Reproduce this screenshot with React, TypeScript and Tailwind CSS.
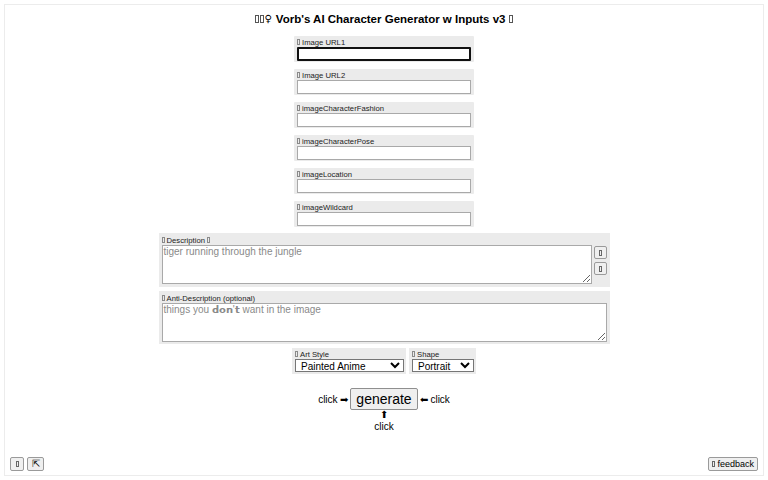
import React from "react";

const font = { fontFamily: '"Liberation Sans", Arial, sans-serif' };

function Tofu({ w = 3, h = 6, className = "" }: { w?: number; h?: number; className?: string }) {
  return (
    <span
      className={"inline-block border align-baseline " + className}
      style={{ width: w, height: h }}
    />
  );
}

function Label({ text, tail }: { text: string; tail?: boolean }) {
  return (
    <div className="text-[7.7px] leading-[9px] text-[#222] whitespace-nowrap">
      <Tofu w={3} h={6} className="mr-[2px] border-[#8a8a8a]" />
      {text}
      {tail && <Tofu w={3} h={6} className="ml-[2px] border-[#8a8a8a]" />}
    </div>
  );
}

function Field({ label, focused }: { label: string; focused?: boolean }) {
  return (
    <div className="w-[180px] bg-[#ebebeb] px-[3px] pt-[2px] pb-[1px] rounded-[1px]">
      <Label text={label} />
      <input
        className={
          "block w-full h-[14px] bg-white outline-none " +
          (focused ? "border-2 border-[#111] rounded-[1px]" : "border border-[#a9a9a9]")
        }
      />
    </div>
  );
}

function SmallBtn({ w = 13, h = 13 }: { w?: number; h?: number }) {
  return (
    <button
      className="flex items-center justify-center bg-[#efefef] border border-[#9a9a9a] rounded-[2px] p-0"
      style={{ width: w, height: h }}
    >
      <Tofu w={3} h={6} className="border-[#666]" />
    </button>
  );
}

export default function App() {
  return (
    <div className="w-[768px] h-[480px] bg-white p-[4px]" style={font}>
      <div className="h-[472px] border border-[#ececec] flex flex-col items-center">
        <div className="mt-[7px] text-[11.5px] leading-[14px] font-bold text-black whitespace-nowrap flex items-center">
          <Tofu w={4} h={8} className="border-[#555]" />
          <Tofu w={4} h={8} className="ml-[1px] border-[#555]" />
          <span className="text-[10px] font-normal ml-[1px]" style={{ fontFamily: '"DejaVu Sans", sans-serif' }}>{"\u2640\uFE0E"}</span>
          <span className="ml-[4px]">Vorb's AI Character Generator w Inputs v3</span>
          <Tofu w={4} h={8} className="ml-[4px] border-[#555]" />
        </div>
        <div className="mt-[10px] flex flex-col gap-[7px]">
          <Field label="Image URL1" focused />
          <Field label="Image URL2" />
          <Field label="imageCharacterFashion" />
          <Field label="imageCharacterPose" />
          <Field label="imageLocation" />
          <Field label="imageWildcard" />
        </div>
        <div className="mt-[6px] w-[451px] bg-[#ebebeb] px-[3px] pt-[3px] pb-[3px]">
          <Label text="Description" tail />
          <div className="flex gap-[2px]">
            <textarea
              className="block w-[430px] h-[39px] bg-white border border-[#a9a9a9] px-[1px] text-[10px] leading-[12px] placeholder:text-[#8a8a8a] resize-y outline-none"
              placeholder="tiger running through the jungle"
            />
            <div className="flex flex-col gap-[3px] pt-[1px]">
              <SmallBtn />
              <SmallBtn />
            </div>
          </div>
        </div>
        <div className="mt-[4px] w-[451px] bg-[#ebebeb] px-[3px] pt-[3px] pb-[2px]">
          <Label text="Anti-Description (optional)" />
          <textarea
            className="block w-full h-[39px] bg-white border border-[#a9a9a9] px-[1px] text-[10px] leading-[12px] placeholder:text-[#8a8a8a] resize-y outline-none"
            placeholder="things you 𝗱𝗼𝗻'𝘁 want in the image"
          />
        </div>
        <div className="mt-[4px] flex gap-[3px]">
          <div className="w-[114px] bg-[#ebebeb] px-[3px] pt-[2px] pb-[2px]">
            <Label text="Art Style" />
            <select className="block w-[109px] h-[13px] bg-white border border-[#767676] text-[10px] leading-[11px] text-black px-[1px] py-0">
              <option>Painted Anime</option>
            </select>
          </div>
          <div className="w-[67px] bg-[#ebebeb] px-[3px] pt-[2px] pb-[2px]">
            <Label text="Shape" />
            <select className="block w-[62px] h-[13px] bg-white border border-[#767676] text-[10px] leading-[11px] text-black px-[1px] py-0">
              <option>Portrait</option>
            </select>
          </div>
        </div>
        <div className="mt-[14px] flex items-center gap-[2px] text-[10px] text-black">
          <span>click ➡</span>
          <button className="h-[22px] px-[5px] bg-[#efefef] border border-[#8f8f8f] rounded-[2px] text-[14px] leading-[18px] text-black">generate</button>
          <span>⬅ click</span>
        </div>
        <div className="-mt-[1px] flex flex-col items-center text-[10px] leading-[12px] text-black">
          <span>⬆</span>
          <span>click</span>
        </div>
        <div className="mt-auto w-full flex justify-between items-end px-[5px] pb-[4px]">
          <div className="flex gap-[3px]">
            <SmallBtn w={14} h={14} />
            <button className="w-[17px] h-[14px] bg-[#efefef] border border-[#9a9a9a] rounded-[2px] text-[10px] leading-[12px] p-0 text-center">⇱</button>
          </div>
          <button className="h-[14px] px-[3px] bg-[#efefef] border border-[#9a9a9a] rounded-[2px] text-[9px] leading-[12px] text-black flex items-center">
            <Tofu w={3} h={6} className="mr-[2px] border-[#666]" />
            feedback
          </button>
        </div>
      </div>
    </div>
  );
}
